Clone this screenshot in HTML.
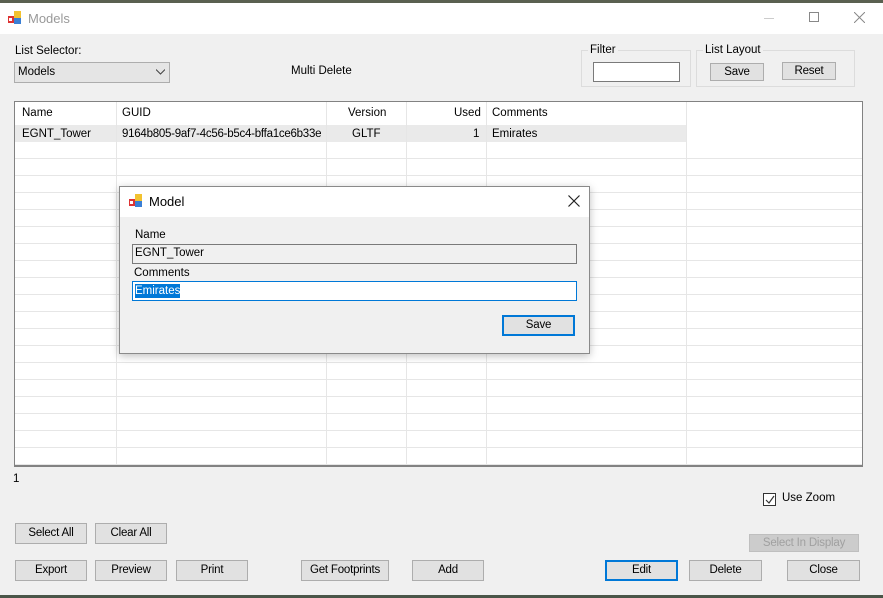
<!DOCTYPE html>
<html><head><meta charset="utf-8"><style>
*{box-sizing:border-box;margin:0;padding:0}
body{width:883px;height:598px;background:#f0f0f0;font-family:"Liberation Sans",sans-serif;font-size:11.5px;color:#000;position:relative;overflow:hidden}
.a{position:absolute}
.btn{position:absolute;background:#e1e1e1;border:1px solid #adadad;text-align:center;font-size:11.5px;line-height:19px;height:21px;letter-spacing:-0.2px}
.grp{position:absolute;border:1px solid #dcdcdc}
.t{position:absolute;white-space:nowrap}
.vl{position:absolute;top:102px;width:1px;height:363px;background:#e6e6e6}
</style></head><body>
<div class="a" style="left:0;top:0;width:883px;height:3px;background:#5a6050"></div>
<div class="a" style="left:0;top:3px;width:883px;height:31px;background:#fff"></div>
<svg class="a" style="left:8px;top:11px" width="14" height="14"><rect x="0" y="5" width="6" height="7" fill="#d33"/><rect x="6" y="0" width="7" height="7" fill="#f2c230"/><rect x="6" y="7" width="7" height="6" fill="#3a7fd5"/><rect x="1" y="7" width="3" height="3" fill="#fff"/></svg>
<div class="t" style="left:28px;top:11px;font-size:13px;color:#999">Models</div>
<div class="a" style="left:764px;top:18px;width:10px;height:1px;background:#ccc"></div>
<div class="a" style="left:809px;top:12px;width:10px;height:10px;border:1px solid #888"></div>
<svg class="a" style="left:854px;top:12px" width="11" height="11"><path d="M0 0L11 11M11 0L0 11" stroke="#888" stroke-width="1"/></svg>

<div class="t" style="left:15px;top:45px">List Selector:</div>
<div class="a" style="left:14px;top:62px;width:156px;height:21px;background:#e5e5e5;border:1px solid #adadad"></div>
<div class="t" style="left:18px;top:66px">Models</div>
<svg class="a" style="left:156px;top:69px" width="9" height="6"><path d="M0 0.5L4.5 5L9 0.5" stroke="#444" fill="none"/></svg>
<div class="t" style="left:291px;top:65px">Multi Delete</div>

<div class="grp" style="left:581px;top:50px;width:110px;height:37px"></div>
<div class="t" style="left:588px;top:44px;background:#f0f0f0;padding:0 2px">Filter</div>
<div class="a" style="left:593px;top:62px;width:87px;height:20px;background:#fff;border:1px solid #7a7a7a"></div>
<div class="grp" style="left:696px;top:50px;width:159px;height:37px"></div>
<div class="t" style="left:703px;top:44px;background:#f0f0f0;padding:0 2px">List Layout</div>
<div class="btn" style="left:710px;top:63px;width:54px;height:18px;line-height:17px">Save</div>
<div class="btn" style="left:782px;top:62px;width:54px;height:18px;line-height:17px">Reset</div>

<div class="a" style="left:14px;top:101px;width:849px;height:366px;background:#fff;border:1px solid #828282;border-bottom:2px solid #828282"></div>
<div class="a" style="left:15px;top:142px;width:847px;height:323px;background:repeating-linear-gradient(to bottom,#fff 0,#fff 16px,#e6e6e6 16px,#e6e6e6 17px)"></div>
<div class="a" style="left:15px;top:125px;width:671px;height:17px;background:#eaeaea"></div>
<div class="vl" style="left:116px"></div><div class="vl" style="left:326px"></div><div class="vl" style="left:406px"></div><div class="vl" style="left:486px"></div><div class="vl" style="left:686px"></div>
<div class="t" style="left:22px;top:107px">Name</div>
<div class="t" style="left:122px;top:107px">GUID</div>
<div class="t" style="left:348px;top:107px">Version</div>
<div class="t" style="left:454px;top:107px">Used</div>
<div class="t" style="left:492px;top:107px">Comments</div>
<div class="t" style="left:22px;top:128px">EGNT_Tower</div>
<div class="t" style="left:122px;top:128px;letter-spacing:-0.25px">9164b805-9af7-4c56-b5c4-bffa1ce6b33e</div>
<div class="t" style="left:352px;top:128px">GLTF</div>
<div class="t" style="left:473px;top:128px">1</div>
<div class="t" style="left:492px;top:128px">Emirates</div>

<div class="t" style="left:13px;top:473px">1</div>
<div class="a" style="left:763px;top:493px;width:13px;height:13px;border:1px solid #333;background:#fff"></div>
<svg class="a" style="left:765px;top:495px" width="10" height="10"><path d="M1 5L4 8L9 1" stroke="#333" fill="none" stroke-width="1.2"/></svg>
<div class="t" style="left:782px;top:492px">Use Zoom</div>

<div class="btn" style="left:15px;top:523px;width:72px">Select All</div>
<div class="btn" style="left:95px;top:523px;width:72px">Clear All</div>
<div class="btn" style="left:749px;top:534px;width:110px;height:18px;line-height:17px;color:#a0a0a0;background:#ccc;border-color:#bfbfbf">Select In Display</div>
<div class="btn" style="left:15px;top:560px;width:72px">Export</div>
<div class="btn" style="left:95px;top:560px;width:72px">Preview</div>
<div class="btn" style="left:176px;top:560px;width:72px">Print</div>
<div class="btn" style="left:301px;top:560px;width:88px">Get Footprints</div>
<div class="btn" style="left:412px;top:560px;width:72px">Add</div>
<div class="btn" style="left:605px;top:560px;width:73px;border:2px solid #0078d7;line-height:17px">Edit</div>
<div class="btn" style="left:689px;top:560px;width:73px">Delete</div>
<div class="btn" style="left:787px;top:560px;width:73px">Close</div>
<div class="a" style="left:0;top:595px;width:883px;height:3px;background:#4a5548"></div>

<div class="a" style="left:119px;top:186px;width:471px;height:168px;background:#f0f0f0;border:1px solid #8a8a8a;box-shadow:0 2px 8px rgba(0,0,0,.25)"></div>
<div class="a" style="left:120px;top:187px;width:469px;height:30px;background:#fff"></div>
<svg class="a" style="left:129px;top:194px" width="14" height="14"><rect x="0" y="5" width="6" height="7" fill="#d33"/><rect x="6" y="0" width="7" height="7" fill="#f2c230"/><rect x="6" y="7" width="7" height="6" fill="#3a7fd5"/><rect x="1" y="7" width="3" height="3" fill="#fff"/></svg>
<div class="t" style="left:149px;top:194px;font-size:13px">Model</div>
<svg class="a" style="left:568px;top:195px" width="12" height="12"><path d="M0.5 0.5L11.5 11.5M11.5 0.5L0.5 11.5" stroke="#222" stroke-width="1.2"/></svg>
<div class="t" style="left:135px;top:229px">Name</div>
<div class="a" style="left:132px;top:244px;width:445px;height:20px;background:#f0f0f0;border:1px solid #7a7a7a"></div>
<div class="t" style="left:135px;top:247px">EGNT_Tower</div>
<div class="t" style="left:134px;top:267px">Comments</div>
<div class="a" style="left:132px;top:281px;width:445px;height:20px;background:#fff;border:1px solid #0078d7"></div>
<div class="t" style="left:135px;top:284px;background:#0078d7;color:#fff;line-height:14px">Emirates</div>
<div class="btn" style="left:502px;top:315px;width:73px;border:2px solid #0078d7;line-height:17px">Save</div>
</body></html>
